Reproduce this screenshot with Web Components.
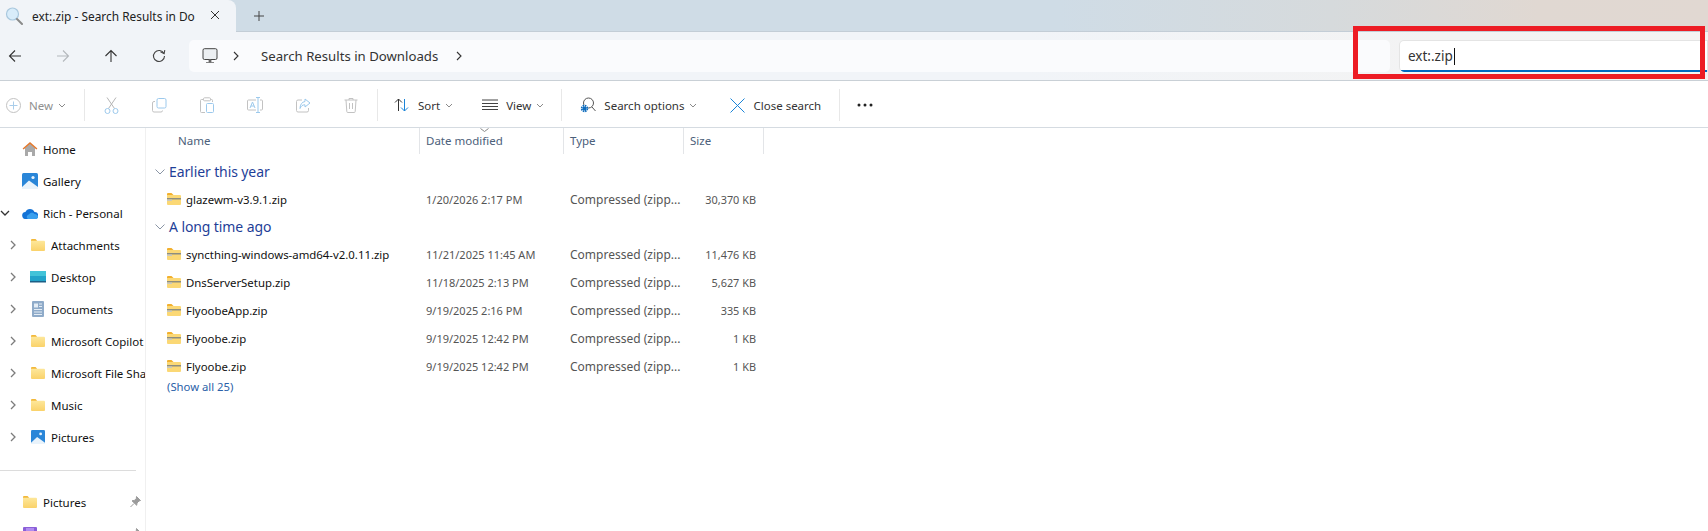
<!DOCTYPE html>
<html><head><meta charset="utf-8">
<style>
html,body{margin:0;padding:0;height:531px;overflow:hidden;background:#fff;font-family:"Noto Sans","Open Sans",sans-serif}
fx-window{display:block}
</style></head><body>
<fx-window>
  <fx-tabstrip slot="top" title-text="ext:.zip - Search Results in Do"></fx-tabstrip>
  <fx-navbar slot="top"></fx-navbar>
  <fx-commandbar slot="top"></fx-commandbar>
  <fx-sidebar slot="side"></fx-sidebar>
  <fx-filelist slot="main"></fx-filelist>
</fx-window>
<script>
const FONT='"Noto Sans","Open Sans",sans-serif';
const ICONS={
 folder:`<svg width="14" height="12" viewBox="0 0 14 12"><defs><linearGradient id="f" x1="0" y1="0" x2="0" y2="1"><stop offset="0" stop-color="#fde79a"/><stop offset="1" stop-color="#fad26a"/></linearGradient></defs><path d="M0 1a1 1 0 0 1 1-1h3.500l1.500 1.500V4H0z" fill="#f2b83a"/><path d="M0 1.800h13a1 1 0 0 1 1 1V11a1 1 0 0 1-1 1H1a1 1 0 0 1-1-1z" fill="url(#f)"/></svg>`,
 zip:`<svg width="14" height="12" viewBox="0 0 14 12"><path d="M0 1a1 1 0 0 1 1-1h3.500l2 2v1H0z" fill="#f2b02e"/><path d="M0 2h13a1 1 0 0 1 1 1v8a1 1 0 0 1-1 1H1a1 1 0 0 1-1-1z" fill="#fbd875"/><rect x="0" y="5" width="14" height="1.500" fill="#8d8d80"/><rect x="0" y="6.500" width="5" height="1.500" fill="#c9c9c0"/></svg>`,
 chevR:`<svg width="6" height="10" viewBox="0 0 6 10"><path d="M1 1l4 4-4 4" fill="none" stroke="#7c7c7c" stroke-width="1.300"/></svg>`,
 chevD:`<svg width="10" height="6" viewBox="0 0 10 6"><path d="M1 1l4 4 4-4" fill="none" stroke="#333" stroke-width="1.300"/></svg>`
};
function def(name,html,init){
  customElements.define(name,class extends HTMLElement{
    constructor(){super();this.attachShadow({mode:'open'});}
    connectedCallback(){
      this.shadowRoot.innerHTML=typeof html==='function'?html(this):html;
      if(init)init(this);
    }
  });
}

def('fx-window',`<style>
:host{display:block;position:relative;width:1708px;height:531px;overflow:hidden;font-family:${FONT};color:#1b1b1b}
.body{display:grid;grid-template-columns:146px 1fr;height:403px}
</style>
<slot name="top"></slot>
<div class="body"><slot name="side"></slot><slot name="main"></slot></div>
<fx-highlight></fx-highlight>`);

def('fx-highlight',`<style>
:host{display:block;position:absolute;left:1353px;top:26px;width:352px;height:53px;box-sizing:border-box;border:5px solid #ed1c24;pointer-events:none}
</style>`);

def('fx-tabstrip',h=>`<style>
:host{display:flex;align-items:flex-end;height:32px;background:linear-gradient(90deg,#cfdce6 0%,#cfdce6 62%,#d6dadc 78%,#e0d8d2 90%,#e1d8d2 100%);box-sizing:border-box;border-bottom:1px solid #c3cdd6}
.tab{width:236px;height:32px;margin-bottom:-1px;background:#f1f4f8;border-radius:0 8px 0 0;display:flex;align-items:center;box-sizing:border-box;padding-left:5px;position:relative;font-size:11.900px}
.t{margin-left:9px;white-space:nowrap;color:#222}
.x{position:absolute;left:209px;top:9px}
.plus{margin-left:17px;align-self:center;display:flex}
</style>
<div class="tab">
<svg width="18" height="20" viewBox="0 0 18 20"><circle cx="7.500" cy="8" r="6" fill="#d8ecfa" stroke="#a9c8de" stroke-width="1.200"/><path d="M12 13l5 5" stroke="#8a8a8a" stroke-width="2" stroke-linecap="round"/></svg>
<span class="t">${h.getAttribute('title-text')}</span>
<svg class="x" width="12" height="12" viewBox="0 0 12 12"><path d="M2 2l8 8M10 2l-8 8" stroke="#333" stroke-width="1"/></svg>
</div>
<div class="plus"><svg width="12" height="12" viewBox="0 0 12 12"><path d="M6 1v10M1 6h10" stroke="#444" stroke-width="1"/></svg></div>`);

def('fx-navbar',`<style>
:host{display:flex;align-items:center;height:49px;background:linear-gradient(90deg,#f1f4f8 0%,#f1f4f8 60%,#f3f3f3 85%,#f5f3f2 100%);box-sizing:border-box;border-bottom:1px solid #c9d0d6;padding:0 0 1px 0;position:relative}
.btns{display:grid;grid-template-columns:repeat(4,48px);width:184px;margin-left:-9px;justify-items:center;margin-right:14px}
svg{display:block}
.addr{width:1201px;height:32px;background:#fafbfd;border-radius:5px;display:flex;align-items:center;font-size:13.200px;color:#333;margin-right:9px;flex:none}
.addr span{margin-left:22px;white-space:nowrap}
.pc{margin-left:13px}.ch{margin-left:15px}
.search{flex:1;height:32px;background:#fff;border:1px solid #e4e4e4;border-bottom:none;box-sizing:border-box;border-radius:5px 0 0 5px;display:flex;align-items:center;padding-left:8px;font-size:13.500px;color:#333;position:relative;overflow:hidden}
.search:after{content:"";position:absolute;left:0;right:0;bottom:0;height:2px;background:#0067c0}
.caret{width:1px;height:17px;background:#111;margin-left:1px}
</style>
<div class="btns">
<svg width="14" height="14" viewBox="0 0 14 14"><path d="M13 7H1.500M7 1.500L1.500 7 7 12.500" fill="none" stroke="#333" stroke-width="1.100"/></svg>
<svg width="14" height="14" viewBox="0 0 14 14"><path d="M1 7h11.500M7 1.500L12.500 7 7 12.500" fill="none" stroke="#b4b8bc" stroke-width="1.100"/></svg>
<svg width="14" height="14" viewBox="0 0 14 14"><path d="M7 13V1.500M1.500 7L7 1.500 12.500 7" fill="none" stroke="#333" stroke-width="1.100"/></svg>
<svg width="14" height="14" viewBox="0 0 14 14"><path d="M11.900 4.500A5.500 5.500 0 1 0 12.500 7" fill="none" stroke="#444" stroke-width="1.100"/><path d="M8.500 2.700l3.600 1.900.7-3.500" fill="none" stroke="#444" stroke-width="1.100"/></svg>
</div>
<div class="addr">
<svg class="pc" width="16" height="16" viewBox="0 0 16 16"><rect x="1" y=".7" width="14" height="10.800" rx="1.500" fill="#eceff2" stroke="#444" stroke-width="1"/><path d="M4 14.500h8M7 11.500h2V14H7z" fill="#666" stroke="#666" stroke-width=".8"/></svg>
<svg class="ch" width="6" height="10" viewBox="0 0 6 10"><path d="M1 1l4 4-4 4" fill="none" stroke="#333" stroke-width="1.100"/></svg>
<span>Search Results in Downloads</span>
<svg style="margin-left:18px" width="6" height="10" viewBox="0 0 6 10"><path d="M1 1l4 4-4 4" fill="none" stroke="#333" stroke-width="1.100"/></svg>
</div>
<div class="search">ext:.zip<span class="caret"></span></div>`);

def('fx-cmd',h=>`<style>
:host{display:inline-flex;align-items:center;font-size:11.500px;gap:8px;color:${h.hasAttribute('off')?'#8f8f8f':'#333'};white-space:nowrap}
.c{margin-left:-3px}
::slotted(svg){display:block}
</style><slot></slot><span>${h.getAttribute('label')||''}</span>${h.hasAttribute('caret')?`<svg class="c" width="8" height="5" viewBox="0 0 8 5"><path d="M1 1l3 3 3-3" fill="none" stroke="#8a8a8a"/></svg>`:''}`);

def('fx-commandbar',`<style>
:host{display:flex;align-items:center;height:47px;background:#fff;box-sizing:border-box;border-bottom:1px solid #d5dbe1;padding:2px 0 0 6px}
.sep{width:1px;height:32px;background:#e8e8e8;flex:none}
svg{display:block;flex:none}
.off{display:grid;grid-template-columns:repeat(6,48px);justify-items:center;align-items:center;width:288px;margin:0 2px}
fx-cmd{flex:none}
</style>
<fx-cmd off caret label="New" style="width:72px"><svg width="15" height="15" viewBox="0 0 15 15"><circle cx="7.500" cy="7.500" r="7" fill="none" stroke="#c2c2c2"/><path d="M7.500 3.500v8M3.500 7.500h8" stroke="#a9cdea"/></svg></fx-cmd>
<div class="sep" style="margin-left:6px"></div>
<div class="off">
<svg width="15" height="17" viewBox="0 0 15 17"><path d="M3 .5l7.500 11M12 .5L4.500 11.500" stroke="#b5b5b5" fill="none"/><circle cx="3.500" cy="14" r="2.500" fill="none" stroke="#9cc9ec"/><circle cx="11.500" cy="14" r="2.500" fill="none" stroke="#9cc9ec"/></svg>
<svg width="15" height="15" viewBox="0 0 15 15"><rect x="5" y=".5" width="9" height="9.500" rx="1.500" fill="none" stroke="#9cc9ec"/><path d="M3 3.500H2A1.500 1.500 0 0 0 .5 5v7.500A1.500 1.500 0 0 0 2 14h7a1.500 1.500 0 0 0 1.500-1.500" fill="none" stroke="#c2c2c2"/></svg>
<svg width="14" height="16" viewBox="0 0 14 16"><path d="M3.500 2.500H1.500a1 1 0 0 0-1 1v11a1 1 0 0 0 1 1H5M10.500 2.500h1a1 1 0 0 1 1 1V5" fill="none" stroke="#c2c2c2"/><rect x="3.500" y=".8" width="7" height="3" rx="1" fill="none" stroke="#c2c2c2"/><rect x="6.500" y="6.500" width="7" height="9" rx="1" fill="none" stroke="#9cc9ec"/></svg>
<svg width="16" height="16" viewBox="0 0 16 16"><path d="M9 3H1.500a1 1 0 0 0-1 1v8a1 1 0 0 0 1 1H9M13 3h1.500a1 1 0 0 1 1 1v8a1 1 0 0 1-1 1H13" fill="none" stroke="#c2c2c2"/><path d="M11 .5v15M9 .5h4M9 15.500h4" stroke="#9cc9ec" fill="none"/><path d="M3 11L5.500 5 8 11M4 9h3" stroke="#9cc9ec" fill="none"/></svg>
<svg width="15" height="15" viewBox="0 0 15 15"><path d="M6 2H2a1.500 1.500 0 0 0-1.500 1.500v9A1.500 1.500 0 0 0 2 14h9a1.500 1.500 0 0 0 1.500-1.500V10" fill="none" stroke="#c2c2c2"/><path d="M9 1l5 4-5 4V6.800C6.500 6.800 5 8 4 10.500 4 6.500 6 4 9 3.500z" fill="none" stroke="#9cc9ec"/></svg>
<svg width="14" height="16" viewBox="0 0 14 16"><path d="M.5 3h13M5 3V1.500h4V3M2 3l.8 11.500a1 1 0 0 0 1 1h6.400a1 1 0 0 0 1-1L12 3M5.500 6v6M8.500 6v6" fill="none" stroke="#c2c2c2"/></svg>
</div>
<div class="sep"></div>
<fx-cmd caret label="Sort" style="margin-left:16px"><svg width="16" height="16" viewBox="0 0 16 16"><path d="M4.500 14V2M1 5.500L4.500 2 8 5.500" fill="none" stroke="#333"/><path d="M10.500 2v12M7 10.500l3.500 3.500 3.500-3.500" fill="none" stroke="#1a84d8"/></svg></fx-cmd>
<fx-cmd caret label="View" style="margin-left:29px"><svg width="16" height="12" viewBox="0 0 16 12"><path d="M0 1h16M0 4.500h16M0 7.500h16M0 10.500h16" stroke="#444"/></svg></fx-cmd>
<div class="sep" style="margin-left:17px"></div>
<fx-cmd caret label="Search options" style="margin-left:18px"><svg width="16" height="16" viewBox="0 0 16 16"><circle cx="8.500" cy="6" r="5" fill="none" stroke="#555"/><path d="M12 10l3.500 4" stroke="#555"/><circle cx="4.500" cy="11.500" r="3.500" fill="#fff"/><circle cx="4.500" cy="11.500" r="2.800" fill="none" stroke="#0f6cbd" stroke-width="1.800" stroke-dasharray="1.500 .7"/><circle cx="4.500" cy="11.500" r="1.900" fill="#0f6cbd"/></svg></fx-cmd>
<fx-cmd label="Close search" style="margin-left:33px"><svg width="15" height="15" viewBox="0 0 15 15"><path d="M.5.500l14 14M14.500.500l-14 14" stroke="#1a84d8"/></svg></fx-cmd>
<div class="sep" style="margin-left:18px"></div>
<svg style="margin-left:17px" width="16" height="4" viewBox="0 0 16 4"><circle cx="2" cy="2" r="1.500" fill="#222"/><circle cx="8" cy="2" r="1.500" fill="#222"/><circle cx="14" cy="2" r="1.500" fill="#222"/></svg>`);

def('fx-nav-item',h=>{
 const ind=h.hasAttribute('indent');const exp=h.getAttribute('expander');
 return `<style>
:host{display:grid;grid-template-columns:${ind?'30px':'22px'} 16px 1fr;align-items:center;height:32px;font-size:11.500px;color:#111;white-space:nowrap;overflow:hidden;box-sizing:border-box;position:relative}
.e{display:flex;padding-left:${ind?10:0}px}
.i{display:flex;justify-content:center}
.t{margin-left:5px;overflow:hidden}
.pin{position:absolute;left:130px;top:10px}
</style>
<div class="e">${exp==='right'?ICONS.chevR:exp==='down'?ICONS.chevD:''}</div>
<div class="i"><slot></slot></div>
<div class="t">${h.getAttribute('label')}</div>
${h.hasAttribute('pin')?`<svg class="pin" width="11" height="12" viewBox="0 0 11 12"><path d="M6.500.500l4 4-1.500.5-2 2-.3 2.300L2 4.800 4.300 4.500l2-2zM4 7.500L.5 11" fill="#9b9b9b" stroke="#9b9b9b"/></svg>`:''}`;});

def('fx-sidebar',`<style>
:host{display:block;height:403px;overflow:hidden;box-sizing:border-box;border-right:1px solid #f0f0f0;padding-top:5px}
.sep{height:1px;background:#dcdcdc;margin:17px 0 15px;width:136px}
</style>
<fx-nav-item label="Home"><svg width="16" height="16" viewBox="0 0 16 16"><path d="M3 7v7.500a.5.500 0 0 0 .5.500H6v-4h4v4h2.500a.5.500 0 0 0 .5-.5V7L8 2.500z" fill="#a9a9a9"/><path d="M8 1L.6 7.500l1 1L8 3l6.400 5.500 1-1z" fill="#e3782c"/></svg></fx-nav-item>
<fx-nav-item label="Gallery"><svg width="16" height="16" viewBox="0 0 16 16"><rect x="0" y="0" width="16" height="16" rx="1.500" fill="#2a86d8"/><circle cx="11" cy="4.500" r="1.600" fill="#e8f3fc"/><path d="M0 14l7-6.500 9 6.500v2H0z" fill="#e9f3fb"/></svg></fx-nav-item>
<fx-nav-item label="Rich - Personal" expander="down"><svg width="16" height="11" viewBox="0 0 16 11"><path d="M4 11a3.500 3.500 0 0 1-.6-7A5 5 0 0 1 12.500 4 3.500 3.500 0 0 1 13 11z" fill="#1473d6"/><path d="M6 11c-2-1-1.500-4 1-4.500C8 4.500 11 4 12.500 6 15 6 16.500 8 16 9.500 15.500 10.500 14.500 11 13 11z" fill="#3aa0ee"/></svg></fx-nav-item>
<fx-nav-item indent label="Attachments" expander="right">${ICONS.folder}</fx-nav-item>
<fx-nav-item indent label="Desktop" expander="right"><svg width="16" height="12" viewBox="0 0 16 12"><rect width="16" height="11" fill="#22a3c9"/><rect width="16" height="5" fill="#42c3d8"/><rect y="10" width="16" height="1.500" fill="#1c5f86"/></svg></fx-nav-item>
<fx-nav-item indent label="Documents" expander="right"><svg width="12" height="16" viewBox="0 0 12 16"><rect width="12" height="16" rx="1" fill="#8fabc9"/><rect x="2" y="2.500" width="4" height="4" fill="#e4edf5"/><path d="M7 3h3M7 5.500h3M2 8.500h8M2 11h8M2 13.500h8" stroke="#e4edf5"/></svg></fx-nav-item>
<fx-nav-item indent label="Microsoft Copilot" expander="right">${ICONS.folder}</fx-nav-item>
<fx-nav-item indent label="Microsoft File Sha" expander="right">${ICONS.folder}</fx-nav-item>
<fx-nav-item indent label="Music" expander="right">${ICONS.folder}</fx-nav-item>
<fx-nav-item indent label="Pictures" expander="right"><svg width="14" height="14" viewBox="0 0 16 16"><rect width="16" height="16" rx="1.500" fill="#2a86d8"/><circle cx="11" cy="4.500" r="1.600" fill="#e8f3fc"/><path d="M0 14.500l7-6.500 9 6.500V16H0z" fill="#e9f3fb"/></svg></fx-nav-item>
<div class="sep"></div>
<fx-nav-item pin label="Pictures">${ICONS.folder}</fx-nav-item>
<fx-nav-item pin label="Vi"><svg width="14" height="14" viewBox="0 0 14 14"><rect width="14" height="14" rx="1" fill="#8a5fd8"/><rect x="3" y="1" width="8" height="12" fill="#b18cf0"/></svg></fx-nav-item>`);

def('fx-group',h=>`<style>
:host{display:flex;align-items:center;height:27px;padding-left:9px;font-size:14px;color:#1f3f98;white-space:nowrap;letter-spacing:-.1px}
svg{margin-right:4px}
</style><svg width="10" height="6" viewBox="0 0 10 6"><path d="M.5.500L5 5 9.500.500" fill="none" stroke="#8a95a5" stroke-width="1"/></svg>${h.getAttribute('label')}`);

const COLS='grid-template-columns:274px 144px 120px 80px';
def('fx-file-row',h=>`<style>
:host{display:grid;${COLS};align-items:center;height:28px;font-size:11.400px;color:#555;white-space:nowrap}
.n{display:flex;align-items:center;padding-left:21px;color:#111}
.n svg{margin-right:5px;flex:none}
.d{padding-left:6px;font-size:11px}.ty{padding-left:6px;font-size:12px}.s{text-align:right;padding-right:8px;font-size:10.900px}
</style><div class="n">${ICONS.zip}<span>${h.getAttribute('name')}</span></div><div class="d">${h.getAttribute('date')}</div><div class="ty">Compressed (zipp...</div><div class="s">${h.getAttribute('size')}</div>`);

def('fx-filelist',`<style>
:host{display:block;height:403px;overflow:hidden;font-size:11.500px}
.head{display:grid;${COLS};height:26px;align-items:center;color:#4c607a;position:relative;margin-bottom:4px}
.head div{height:26px;line-height:25px;box-sizing:border-box;border-right:1px solid #e3e5e8;padding-left:6px;white-space:nowrap}
.head div:first-child{padding-left:32px}
.sort{position:absolute;left:334px;top:0}
.show{height:14px;line-height:14px;padding-left:21px;color:#2b5fa8;font-size:11.300px}
</style>
<div class="head"><div>Name</div><div>Date modified</div><div>Type</div><div>Size</div>
<svg class="sort" width="9" height="4" viewBox="0 0 9 4"><path d="M.5.500L4.500 3.500 8.500.500" fill="none" stroke="#888"/></svg></div>
<fx-group label="Earlier this year"></fx-group>
<fx-file-row name="glazewm-v3.9.1.zip" date="1/20/2026 2:17 PM" size="30,370 KB"></fx-file-row>
<fx-group label="A long time ago"></fx-group>
<fx-file-row name="syncthing-windows-amd64-v2.0.11.zip" date="11/21/2025 11:45 AM" size="11,476 KB"></fx-file-row>
<fx-file-row name="DnsServerSetup.zip" date="11/18/2025 2:13 PM" size="5,627 KB"></fx-file-row>
<fx-file-row name="FlyoobeApp.zip" date="9/19/2025 2:16 PM" size="335 KB"></fx-file-row>
<fx-file-row name="Flyoobe.zip" date="9/19/2025 12:42 PM" size="1 KB"></fx-file-row>
<fx-file-row name="Flyoobe.zip" date="9/19/2025 12:42 PM" size="1 KB"></fx-file-row>
<div class="show">(Show all 25)</div>`);
</script>
</body></html>
